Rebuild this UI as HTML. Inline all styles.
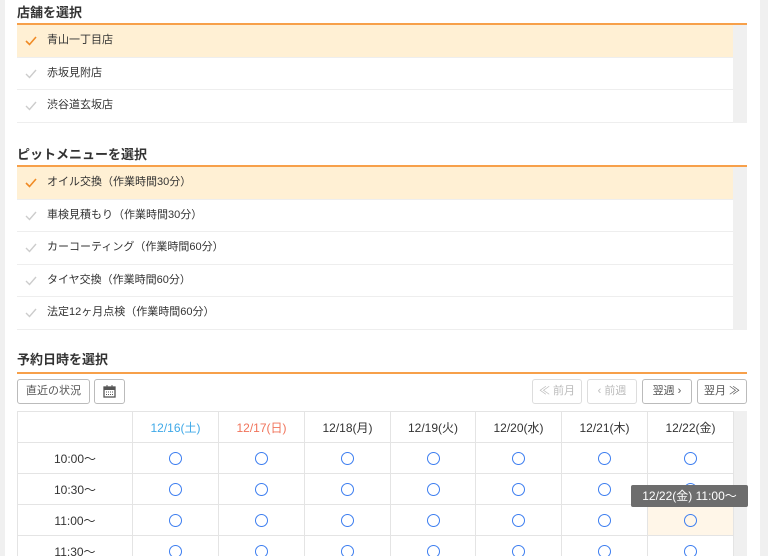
<!DOCTYPE html>
<html><head><meta charset="utf-8"><style>
*{box-sizing:border-box;margin:0;padding:0}
html{width:768px;height:556px;overflow:hidden}
body{width:768px;height:556px;overflow:hidden;background:#f0f0f0;font-family:"Liberation Sans","Noto Sans CJK JP",sans-serif;color:#333;position:relative}
.main{position:absolute;left:5px;top:0;width:755px;height:556px;background:#fff}
.h{position:absolute;left:17px;font-size:13px;font-weight:bold;color:#333}
.line{position:absolute;left:17px;width:730px;height:2px;background:#f7a04a}
.list{position:absolute;left:17px;width:730px;background:#f0f0f0}
.row{width:716px;height:32.6px;background:#fff;border-bottom:1px solid #eee;font-size:11px;line-height:31px;padding-left:30px;position:relative}
.row.sel{background:#fff0d4}
.row svg{position:absolute;left:8px;top:11px}
.btn{position:absolute;top:379px;height:25px;border:1px solid #bbb;border-radius:3px;background:#fff;font-size:11px;line-height:23px;text-align:center;color:#555}
.btn.dis{color:#bbb;border-color:#ddd}
table{position:absolute;left:17px;top:411px;border-collapse:collapse;font-size:12px;table-layout:fixed;width:716px}
td{border:1px solid #e4e4e4;height:31px;text-align:center;padding:0}
.c{display:inline-block;width:13px;height:13px;border:1.5px solid #3d7ef0;border-radius:50%;vertical-align:middle}
</style></head><body>
<div class="main"></div>
<div class="h" style="top:2px">店舗を選択</div>
<div class="line" style="top:23px"></div>
<div class="list" style="top:25px">
<div class="row sel"><svg width="12" height="10"><path d="M1 5l3.5 3.5L11 1" stroke="#f08a24" stroke-width="1.6" fill="none"/></svg>青山一丁目店</div>
<div class="row"><svg width="12" height="10"><path d="M1 5l3.5 3.5L11 1" stroke="#ccc" stroke-width="1.4" fill="none"/></svg>赤坂見附店</div>
<div class="row"><svg width="12" height="10"><path d="M1 5l3.5 3.5L11 1" stroke="#ccc" stroke-width="1.4" fill="none"/></svg>渋谷道玄坂店</div>
</div>
<div class="h" style="top:144px">ピットメニューを選択</div>
<div class="line" style="top:165px"></div>
<div class="list" style="top:167px">
<div class="row sel"><svg width="12" height="10"><path d="M1 5l3.5 3.5L11 1" stroke="#f08a24" stroke-width="1.6" fill="none"/></svg>オイル交換（作業時間30分）</div>
<div class="row"><svg width="12" height="10"><path d="M1 5l3.5 3.5L11 1" stroke="#ccc" stroke-width="1.4" fill="none"/></svg>車検見積もり（作業時間30分）</div>
<div class="row"><svg width="12" height="10"><path d="M1 5l3.5 3.5L11 1" stroke="#ccc" stroke-width="1.4" fill="none"/></svg>カーコーティング（作業時間60分）</div>
<div class="row"><svg width="12" height="10"><path d="M1 5l3.5 3.5L11 1" stroke="#ccc" stroke-width="1.4" fill="none"/></svg>タイヤ交換（作業時間60分）</div>
<div class="row"><svg width="12" height="10"><path d="M1 5l3.5 3.5L11 1" stroke="#ccc" stroke-width="1.4" fill="none"/></svg>法定12ヶ月点検（作業時間60分）</div>
</div>
<div class="h" style="top:349px">予約日時を選択</div>
<div class="line" style="top:372px"></div>
<div class="btn" style="left:17px;width:73px">直近の状況</div>
<div class="btn" style="left:94px;width:31px"><svg width="13" height="13" style="margin-top:5px"><rect x="1" y="2" width="11" height="10" fill="none" stroke="#555" stroke-width="1.3"/><rect x="1" y="2" width="11" height="3" fill="#555"/><path d="M4 0v3M9 0v3" stroke="#555"/><path d="M3 7h7M3 9.5h7" stroke="#555" stroke-dasharray="1 1"/></svg></div>
<div class="btn dis" style="left:532px;width:50px">≪ 前月</div>
<div class="btn dis" style="left:587px;width:50px">‹ 前週</div>
<div class="btn" style="left:642px;width:50px">翌週 ›</div>
<div class="btn" style="left:697px;width:50px">翌月 ≫</div>
<div style="position:absolute;left:733px;top:411px;width:14px;height:145px;background:#f0f0f0"></div>
<table>
<colgroup><col style="width:115px"><col style="width:86px"><col style="width:86px"><col style="width:86px"><col style="width:85px"><col style="width:86px"><col style="width:86px"><col style="width:86px"></colgroup>
<tr><td></td><td style="color:#3fa9e8">12/16(土)</td><td style="color:#f0735a">12/17(日)</td><td>12/18(月)</td><td>12/19(火)</td><td>12/20(水)</td><td>12/21(木)</td><td>12/22(金)</td></tr>
<tr><td>10:00〜</td><td><i class="c"></i></td><td><i class="c"></i></td><td><i class="c"></i></td><td><i class="c"></i></td><td><i class="c"></i></td><td><i class="c"></i></td><td><i class="c"></i></td></tr>
<tr><td>10:30〜</td><td><i class="c"></i></td><td><i class="c"></i></td><td><i class="c"></i></td><td><i class="c"></i></td><td><i class="c"></i></td><td><i class="c"></i></td><td><i class="c"></i></td></tr>
<tr><td>11:00〜</td><td><i class="c"></i></td><td><i class="c"></i></td><td><i class="c"></i></td><td><i class="c"></i></td><td><i class="c"></i></td><td><i class="c"></i></td><td style="background:#fff6e8"><i class="c"></i></td></tr>
<tr><td>11:30〜</td><td><i class="c"></i></td><td><i class="c"></i></td><td><i class="c"></i></td><td><i class="c"></i></td><td><i class="c"></i></td><td><i class="c"></i></td><td><i class="c"></i></td></tr>
</table>
<div style="position:absolute;left:631px;top:485px;width:117px;height:22px;background:#6d6d6d;border-radius:2px;color:#fff;font-size:12px;line-height:22px;text-align:center">12/22(金) 11:00〜</div>
</body></html>
